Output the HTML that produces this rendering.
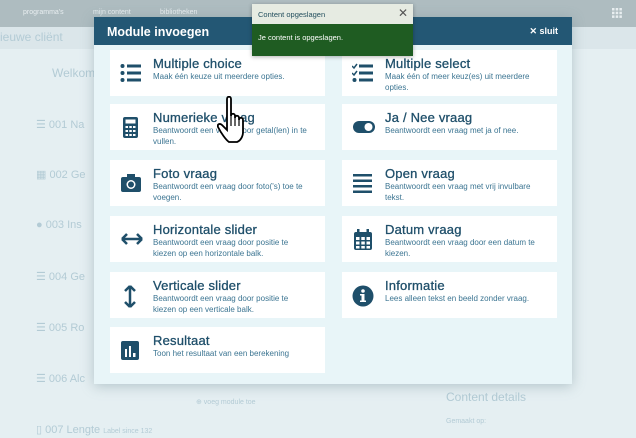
<!DOCTYPE html>
<html><head><meta charset="utf-8"><style>
*{box-sizing:border-box;margin:0;padding:0}
body{width:636px;height:438px;overflow:hidden;position:relative;background:#e5eff2;font-family:"Liberation Sans",sans-serif}
.top{position:absolute;left:0;top:0;width:636px;height:27px;background:#aebcc0}
.top span{position:absolute;top:9px;font-size:7px;color:#e8eef0}
.sub{position:absolute;left:0;top:27px;width:636px;height:22px;background:#dbe6ea}
.bg{position:absolute;color:#b3cbd5;font-size:11px}
.modal{position:absolute;left:94px;top:17px;width:478px;height:367px;background:#e8f5f8;box-shadow:0 2px 12px rgba(100,130,140,.4)}
.mh{height:28px;background:#235774;color:#fff;font-weight:bold;font-size:12.5px;padding:8px 0 0 13px;position:relative}
.mh .cl{position:absolute;right:14px;top:9px;font-size:9px}
.card{position:absolute;width:215px;height:46px;background:#fff}
.card svg{position:absolute;left:10px;top:13px}
.card h3{position:absolute;left:43px;top:6px;font-size:13px;font-weight:normal;color:#1f4f6a;letter-spacing:.2px;-webkit-text-stroke:.3px #1f4f6a}
.card p{position:absolute;left:43px;top:21px;width:160px;font-size:8px;line-height:11px;color:#3c7592}
.toast{position:absolute;left:252px;top:4px;width:161px;height:52px;box-shadow:0 1px 4px rgba(0,0,0,.3)}
.th{height:20px;background:#e6ebe2;font-size:7.5px;color:#234f5e;padding:6px 0 0 6px;position:relative}
.th b{position:absolute;right:5px;top:2px;font-weight:normal;font-size:12px;color:#555}
.tb{height:32px;background:#1f5c22;color:#fff;font-size:7.5px;padding:9px 0 0 6px}
</style></head><body>
<div class="top"><span style="left:23px">programma's</span><span style="left:93px">mijn content</span><span style="left:160px">bibliotheken</span>
<svg style="position:absolute;left:612px;top:8px" width="10" height="10" fill="#e8eef0"><rect x="0" y="0" width="2.5" height="2.5"/><rect x="3.7" y="0" width="2.5" height="2.5"/><rect x="7.4" y="0" width="2.5" height="2.5"/><rect x="0" y="3.7" width="2.5" height="2.5"/><rect x="3.7" y="3.7" width="2.5" height="2.5"/><rect x="7.4" y="3.7" width="2.5" height="2.5"/><rect x="0" y="7.4" width="2.5" height="2.5"/><rect x="3.7" y="7.4" width="2.5" height="2.5"/><rect x="7.4" y="7.4" width="2.5" height="2.5"/></svg></div>
<div class="sub"></div>
<div class="bg" style="left:0;top:30px;font-size:12px">ieuwe cliënt</div>
<div class="bg" style="left:52px;top:66px;font-size:12px">Welkom</div>
<div class="bg" style="left:36px;top:118px">☰ 001 Na</div>
<div class="bg" style="left:36px;top:168px">▦ 002 Ge</div>
<div class="bg" style="left:36px;top:219px">● 003 Ins</div>
<div class="bg" style="left:36px;top:270px">☰ 004 Ge</div>
<div class="bg" style="left:36px;top:321px">☰ 005 Ro</div>
<div class="bg" style="left:36px;top:372px">☰ 006 Alc</div>
<div class="bg" style="left:36px;top:423px">▯ 007 Lengte <span style="font-size:7px">Label since 132</span></div>
<div class="bg" style="left:446px;top:390px;font-size:12px">Content details</div>
<div class="bg" style="left:446px;top:418px;font-size:7px">Gemaakt op:</div>
<div class="bg" style="left:196px;top:398px;font-size:7px">⊕ voeg module toe</div>

<div class="modal">
<div class="mh">Module invoegen<span class="cl">✕ sluit</span></div>
</div>

<div class="card" style="left:110px;top:50px"><svg width="22" height="20" fill="#1f4f6a"><circle cx="2.5" cy="3" r="2"/><circle cx="2.5" cy="10" r="2"/><circle cx="2.5" cy="17" r="2"/><rect x="7" y="1.5" width="14" height="3"/><rect x="7" y="8.5" width="14" height="3"/><rect x="7" y="15.5" width="14" height="3"/></svg><h3>Multiple choice</h3><p>Maak één keuze uit meerdere opties.</p></div>
<div class="card" style="left:342px;top:50px"><svg width="22" height="20" fill="#1f4f6a"><path d="M0 3l2 2 3-4" stroke="#1f4f6a" stroke-width="1.5" fill="none"/><path d="M0 10l2 2 3-4" stroke="#1f4f6a" stroke-width="1.5" fill="none"/><circle cx="2.5" cy="17" r="2"/><rect x="7" y="1.5" width="14" height="3"/><rect x="7" y="8.5" width="14" height="3"/><rect x="7" y="15.5" width="14" height="3"/></svg><h3>Multiple select</h3><p>Maak één of meer keuz(es) uit meerdere opties.</p></div>

<div class="card" style="left:110px;top:104px"><svg width="22" height="22"><rect x="3" y="0" width="15" height="21" rx="2" fill="#1f4f6a"/><rect x="5.5" y="2.5" width="10" height="4" fill="#fff"/><g fill="#fff"><rect x="5.5" y="9" width="2.5" height="2"/><rect x="9.3" y="9" width="2.5" height="2"/><rect x="13" y="9" width="2.5" height="2"/><rect x="5.5" y="13" width="2.5" height="2"/><rect x="9.3" y="13" width="2.5" height="2"/><rect x="13" y="13" width="2.5" height="2"/><rect x="5.5" y="17" width="2.5" height="2"/><rect x="9.3" y="17" width="2.5" height="2"/><rect x="13" y="17" width="2.5" height="2"/></g></svg><h3>Numerieke vraag</h3><p>Beantwoordt een vraag door getal(len) in te vullen.</p></div>
<div class="card" style="left:342px;top:104px"><svg width="24" height="20"><rect x="1" y="4" width="22" height="12" rx="6" fill="#1f4f6a"/><circle cx="16.5" cy="10" r="4" fill="#fff"/></svg><h3>Ja / Nee vraag</h3><p>Beantwoordt een vraag met ja of nee.</p></div>

<div class="card" style="left:110px;top:160px"><svg width="22" height="20"><rect x="1" y="4" width="20" height="15" rx="2" fill="#1f4f6a"/><rect x="7" y="1" width="8" height="4" fill="#1f4f6a"/><circle cx="11" cy="11.5" r="4.5" fill="#fff"/><circle cx="11" cy="11.5" r="3" fill="#1f4f6a"/></svg><h3>Foto vraag</h3><p>Beantwoordt een vraag door foto('s) toe te voegen.</p></div>
<div class="card" style="left:342px;top:160px"><svg width="22" height="20" fill="#1f4f6a"><rect x="1" y="1" width="19" height="2.5"/><rect x="1" y="6.5" width="19" height="2.5"/><rect x="1" y="12" width="19" height="2.5"/><rect x="1" y="17.5" width="19" height="2.5"/></svg><h3>Open vraag</h3><p>Beantwoordt een vraag met vrij invulbare tekst.</p></div>

<div class="card" style="left:110px;top:216px"><svg width="24" height="20"><path d="M2 10h20M2 10l5-5M2 10l5 5M22 10l-5-5M22 10l-5 5" stroke="#1f4f6a" stroke-width="2.5" fill="none"/></svg><h3>Horizontale slider</h3><p>Beantwoordt een vraag door positie te kiezen op een horizontale balk.</p></div>
<div class="card" style="left:342px;top:216px"><svg width="22" height="22"><rect x="2" y="3" width="18" height="18" rx="2" fill="#1f4f6a"/><rect x="5" y="0" width="2.5" height="5" fill="#1f4f6a"/><rect x="14.5" y="0" width="2.5" height="5" fill="#1f4f6a"/><g fill="#fff"><rect x="4" y="8" width="3.5" height="3"/><rect x="9.3" y="8" width="3.5" height="3"/><rect x="14.5" y="8" width="3.5" height="3"/><rect x="4" y="12.5" width="3.5" height="3"/><rect x="9.3" y="12.5" width="3.5" height="3"/><rect x="14.5" y="12.5" width="3.5" height="3"/><rect x="4" y="17" width="3.5" height="2.5"/><rect x="9.3" y="17" width="3.5" height="2.5"/><rect x="14.5" y="17" width="3.5" height="2.5"/></g></svg><h3>Datum vraag</h3><p>Beantwoordt een vraag door een datum te kiezen.</p></div>

<div class="card" style="left:110px;top:272px"><svg width="22" height="24"><path d="M10 1v21M10 1l-5 5M10 1l5 5M10 22l-5-5M10 22l5-5" stroke="#1f4f6a" stroke-width="2.5" fill="none"/></svg><h3>Verticale slider</h3><p>Beantwoordt een vraag door positie te kiezen op een verticale balk.</p></div>
<div class="card" style="left:342px;top:272px"><svg width="22" height="22"><circle cx="11" cy="11" r="10.5" fill="#1f4f6a"/><circle cx="11" cy="6" r="1.8" fill="#fff"/><rect x="9.5" y="9" width="3" height="8" fill="#fff"/><rect x="8" y="9" width="4" height="1.5" fill="#fff"/><rect x="8" y="15.5" width="6" height="1.5" fill="#fff"/></svg><h3>Informatie</h3><p>Lees alleen tekst en beeld zonder vraag.</p></div>

<div class="card" style="left:110px;top:327px"><svg width="22" height="22"><rect x="1" y="1" width="18" height="19" rx="2" fill="#1f4f6a"/><rect x="5" y="9" width="2" height="8" fill="#fff"/><rect x="9" y="6" width="2" height="11" fill="#fff"/><rect x="13" y="13" width="2.5" height="4" fill="#fff"/></svg><h3>Resultaat</h3><p>Toon het resultaat van een berekening</p></div>

<div class="toast"><div class="th">Content opgeslagen<b>✕</b></div><div class="tb">Je content is opgeslagen.</div></div>

<svg style="position:absolute;left:217px;top:96px" width="40" height="50" viewBox="0 0 40 50"><path d="M10 3c0-3 4-3 4 0v17c0-3 4-3 4 0v2c0-3 4-3 4 0v2c0-3 4-3 4 0v12c0 5-3 9-6 10h-8c-3-2-8-9-11-15-1-3 2-4 4-2l5 5z" fill="#fff" stroke="#000" stroke-width="1.8"/><path d="M14 20v10M18 22v8M22 24v6" stroke="#000" stroke-width="1.2"/></svg>
</body></html>
